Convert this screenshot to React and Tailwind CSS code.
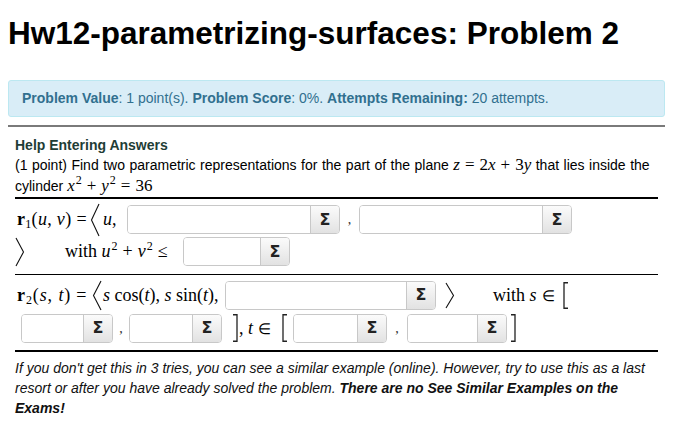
import React from "react";

const SANS = "font-['Liberation_Sans',Arial,sans-serif]";
const SERIF = "font-['Liberation_Serif','Times_New_Roman',serif]";

function Ans({ w = 213 }) {
  return (
    <div
      className="flex h-[29px] shrink-0 overflow-hidden rounded-[4px] border border-[#c8c8c8] bg-white"
      style={{ width: w }}
    >
      <div className="flex-1 bg-white" />
      <div className="flex w-[29px] items-center justify-center border-l border-[#c8c8c8] bg-gradient-to-b from-[#fbfbfb] to-[#e2e2e2]">
        <span className="font-['DejaVu_Sans',sans-serif] text-[16px] font-bold leading-none text-[#222]">Σ</span>
      </div>
    </div>
  );
}

function LAngle({ h = 34 }) {
  return (
    <svg width="10" height={h} viewBox={`0 0 10 ${h}`} className="shrink-0">
      <polyline points={`9,1 1.5,${h / 2} 9,${h - 1}`} fill="none" stroke="#111" strokeWidth="1.1" />
    </svg>
  );
}
function RAngle({ h = 30 }) {
  return (
    <svg width="10" height={h} viewBox={`0 0 10 ${h}`} className="shrink-0">
      <polyline points={`1,1 8.5,${h / 2} 1,${h - 1}`} fill="none" stroke="#111" strokeWidth="1.1" />
    </svg>
  );
}
function LBrack({ h = 28 }) {
  return (
    <svg width="6" height={h} viewBox={`0 0 6 ${h}`} className="shrink-0">
      <polyline points={`5,0.75 1,0.75 1,${h - 0.75} 5,${h - 0.75}`} fill="none" stroke="#222" strokeWidth="1.3" />
    </svg>
  );
}
function RBrack({ h = 28 }) {
  return (
    <svg width="6" height={h} viewBox={`0 0 6 ${h}`} className="shrink-0">
      <polyline points={`1,0.75 5,0.75 5,${h - 0.75} 1,${h - 0.75}`} fill="none" stroke="#222" strokeWidth="1.3" />
    </svg>
  );
}

const I = ({ children }) => <span className="italic">{children}</span>;
const Sup = ({ children }) => (
  <span className="relative -top-[7px] ml-[1px] text-[12px] not-italic leading-none">{children}</span>
);
const Op = ({ children }) => <span className="mx-[5px]">{children}</span>;
const Elem = () => <span className="mx-[5px] text-[15px]">∈</span>;

function Comma({ w }) {
  return (
    <span className={`${SERIF} flex shrink-0 justify-center text-[14px] text-[#333]`} style={{ width: w }}>
      ,
    </span>
  );
}

export default function App() {
  return (
    <div className={`${SANS} w-[673px] bg-white px-[8px] text-[14px] text-black`}>
      <h1 className="pt-[16px] text-[31.5px] font-bold leading-[35px]">Hw12-parametrizing-surfaces: Problem 2</h1>

      <div className="mt-[29px] h-[37px] rounded-[3px] border border-[#bce8f1] bg-[#d9edf7] pl-[13px] text-[14px] leading-[35px] text-[#31708f]">
        <b>Problem Value</b>: 1 point(s). <b>Problem Score</b>: 0%. <b>Attempts Remaining:</b> 20 attempts.
      </div>

      <div className="mt-[8px] h-[2px] bg-[#7a7a7a]" />

      <div className="px-[7px]">
        <div className="mt-[9px] h-[18px] text-[14px] font-bold leading-[18px] text-[#1f3d36]">
          Help Entering Answers
        </div>
        <div className="leading-[21px]">
          <div className="h-[21px] whitespace-nowrap [word-spacing:0.6px]">
            (1 point) Find two parametric representations for the part of the plane{" "}
            <span className={`${SERIF} text-[17px] [word-spacing:0px]`}>
              <I>z</I>
              <Op>=</Op>2<I>x</I>
              <Op>+</Op>3<I>y</I>
            </span>{" "}
            that lies inside the
          </div>
          <div className="h-[21px] whitespace-nowrap">
            cylinder{" "}
            <span className={`${SERIF} text-[17px]`}>
              <I>x</I>
              <Sup>2</Sup>
              <Op>+</Op>
              <I>y</I>
              <Sup>2</Sup>
              <Op>=</Op>36
            </span>
          </div>
        </div>

        <div className="mt-[1px] h-[1.5px] bg-black" />

        {/* r1 */}
        <div className={`${SERIF} mt-[4px] text-[18px]`}>
          <div className="flex h-[34px] items-center">
            <span className="w-[75px] shrink-0 whitespace-nowrap pl-[2px] tracking-[0.3px]">
              <b>r</b>
              <sub className="text-[12px]">1</sub>(<I>u</I>, <I>v</I>)<Op>=</Op>
            </span>
            <LAngle h={34} />
            <span className="w-[27px] shrink-0 pl-[3px]">
              <I>u</I>,
            </span>
            <Ans w={213} />
            <Comma w={19} />
            <Ans w={213} />
          </div>
          <div className="flex h-[30px] items-center">
            <RAngle h={30} />
            <span className="w-[158px] shrink-0 whitespace-nowrap pl-[40px]">
              with <I>u</I>
              <Sup>2</Sup>
              <Op>+</Op>
              <I>v</I>
              <Sup>2</Sup>
              <Op>≤</Op>
            </span>
            <Ans w={107} />
          </div>
        </div>

        <div className="mt-[7px] h-[1.5px] bg-black" />

        {/* r2 */}
        <div className={`${SERIF} mt-[5px] text-[18px]`}>
          <div className="flex h-[30px] items-center">
            <span className="w-[77px] shrink-0 whitespace-nowrap pl-[2px] tracking-[0.9px]">
              <b>r</b>
              <sub className="text-[12px]">2</sub>(<I>s</I>, <I>t</I>)<Op>=</Op>
            </span>
            <LAngle h={31} />
            <span className="w-[123px] shrink-0 whitespace-nowrap pl-[1px]">
              <I>s</I> cos(<I>t</I>), <I>s</I> sin(<I>t</I>),
            </span>
            <Ans w={211} />
            <span className="w-[9px] shrink-0" />
            <RAngle h={27} />
            <span className="w-[108px] shrink-0 whitespace-nowrap pl-[38px]">
              with <I>s</I>
              <Elem />
            </span>
            <LBrack h={27} />
          </div>
          <div className="mt-[3px] flex h-[30px] items-center">
            <span className="w-[6px] shrink-0" />
            <Ans w={92} />
            <Comma w={16} />
            <Ans w={93} />
            <span className="w-[10px] shrink-0" />
            <RBrack h={28} />
            <span className="w-[44px] shrink-0 whitespace-nowrap pl-[1px]">
              , <I>t</I>
              <Elem />
            </span>
            <LBrack h={28} />
            <span className="w-[5px] shrink-0" />
            <Ans w={94} />
            <Comma w={20} />
            <Ans w={100} />
            <span className="w-[3px] shrink-0" />
            <RBrack h={28} />
          </div>
        </div>

        <div className="mt-[7px] h-[1.5px] bg-black" />

        <p className="mt-[6px] text-[14px] italic leading-[20px] text-[#111]">
          If you don't get this in 3 tries, you can see a similar example (online). However, try to use this as a last
          resort or after you have already solved the problem.{" "}
          <b>There are no See Similar Examples on the Exams!</b>
        </p>
      </div>
    </div>
  );
}
